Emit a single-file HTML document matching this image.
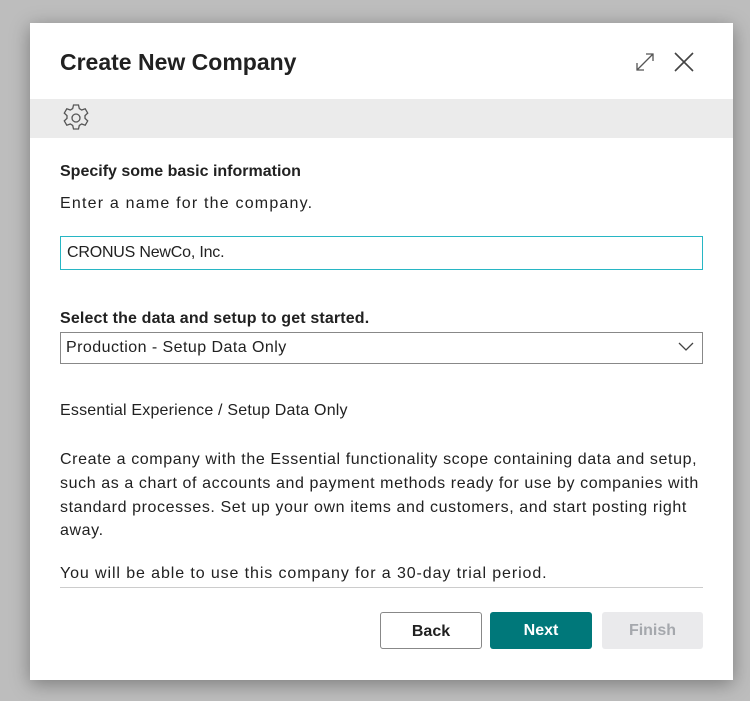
<!DOCTYPE html><html><head><style>
body{margin:0;width:750px;height:701px;background:#bdbdbd;font-family:"Liberation Sans",sans-serif;color:#212121;position:relative;overflow:hidden}
.d{position:absolute;left:30px;top:23px;width:703px;height:657px;background:#fff;box-shadow:0 4px 18px rgba(0,0,0,.35)}
.a{position:absolute;white-space:nowrap}
.t{font-size:16px;letter-spacing:-0.2px}
.b{font-weight:bold}
.btn{position:absolute;top:589px;height:37px;border-radius:3px;font-size:16px;font-weight:bold;text-align:center;line-height:37px;box-sizing:border-box}
</style></head><body><div class="d">
<div class="a b" style="left:30px;top:26px;font-size:23px;letter-spacing:0px">Create New Company</div>
<svg class="a" style="left:604px;top:28px" width="22" height="22" viewBox="0 0 22 22" fill="none" stroke="#555" stroke-width="1.3"><path d="M3 19L19 3M12 3h7v7M3 12v7h7"/></svg>
<svg class="a" style="left:643px;top:28px" width="22" height="22" viewBox="0 0 22 22" fill="none" stroke="#444" stroke-width="1.6"><path d="M2 2L20 20M20 2L2 20"/></svg>
<div class="a" style="left:0;top:76px;width:703px;height:39px;background:#ebebeb"></div>
<svg class="a" style="left:30px;top:79px" width="32" height="32" viewBox="0 0 32 32" fill="none" stroke="#555" stroke-width="1.3"><path d="M13.5 3h5l.8 3.6 2.4 1.4 3.5-1.2 2.5 4.3-2.7 2.5v2.8l2.7 2.5-2.5 4.3-3.5-1.2-2.4 1.4-.8 3.6h-5l-.8-3.6-2.4-1.4-3.5 1.2-2.5-4.3 2.7-2.5v-2.8L4.3 11.1l2.5-4.3 3.5 1.2 2.4-1.4z"/><circle cx="16" cy="16" r="4"/></svg>
<div class="a t b" style="left:30px;top:140px;letter-spacing:0">Specify some basic information</div>
<div class="a t" style="left:30px;top:172px;letter-spacing:1.2px">Enter a name for the company.</div>
<div class="a t" style="left:30px;top:213px;width:643px;height:34px;border:1px solid #27b6c4;box-sizing:border-box;line-height:32px;padding-left:6px">CRONUS NewCo, Inc.</div>
<div class="a t b" style="left:30px;top:287px;letter-spacing:0.15px">Select the data and setup to get started.</div>
<div class="a t" style="left:30px;top:309px;width:643px;height:32px;border:1px solid #888;box-sizing:border-box;line-height:30px;padding-left:5px;letter-spacing:0.45px">Production - Setup Data Only</div>
<svg class="a" style="left:648px;top:318px" width="16" height="10" viewBox="0 0 16 10" fill="none" stroke="#444" stroke-width="1.3"><path d="M1 2l7 7 7-7"/></svg>
<div class="a t" style="left:30px;top:379px;letter-spacing:0.2px">Essential Experience / Setup Data Only</div>
<div class="a t" style="left:30px;top:425px;line-height:23.8px;letter-spacing:0.6px">Create a company with the Essential functionality scope containing data and setup,<br>such as a chart of accounts and payment methods ready for use by companies with<br>standard processes. Set up your own items and customers, and start posting right<br>away.</div>
<div class="a t" style="left:30px;top:542px;letter-spacing:0.9px">You will be able to use this company for a 30-day trial period.</div>
<div class="a" style="left:30px;top:564px;width:643px;height:1px;background:#ccc"></div>
<div class="btn" style="left:350px;width:102px;border:1px solid #888;background:#fff">Back</div>
<div class="btn" style="left:460px;width:102px;background:#00787a;color:#fff">Next</div>
<div class="btn" style="left:572px;width:101px;background:#eaeaec;color:#a5a8ad">Finish</div>
</div></body></html>
